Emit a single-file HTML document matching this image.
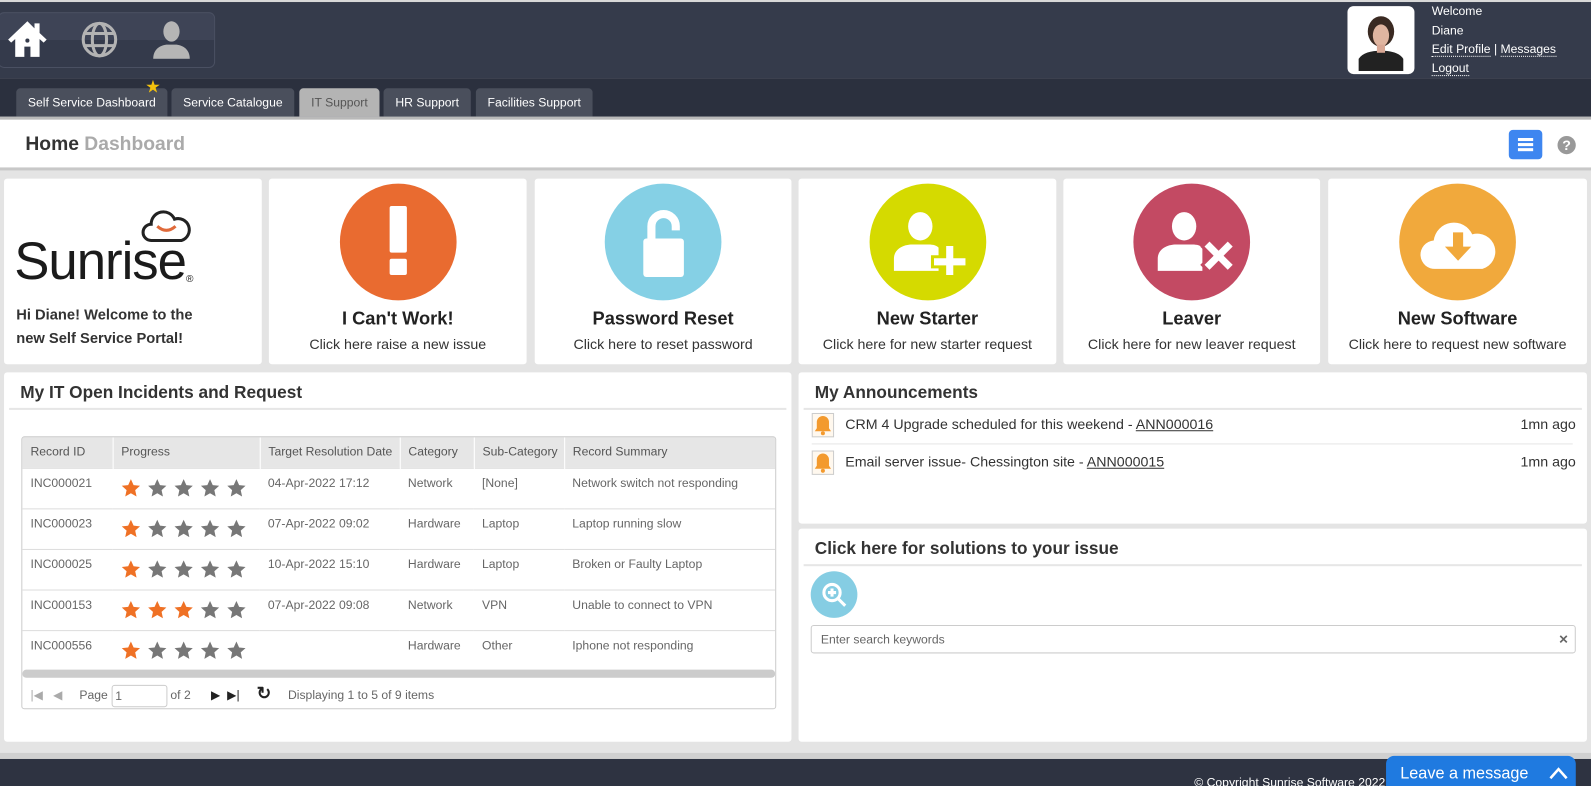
<!DOCTYPE html>
<html><head><meta charset="utf-8">
<style>
*{margin:0;padding:0;box-sizing:border-box}
body{width:1591px;height:786px;overflow:hidden;background:#e4e4e4;font-family:"Liberation Sans",Arial,sans-serif;position:relative}
#wrap{position:absolute;left:0;top:0;width:1568px;height:775px;transform:scale(1.01467);transform-origin:0 0;overflow:hidden}
.abs{position:absolute}
#top{left:0;top:0;width:1568px;height:77px;background:#353b4b;border-top:2px solid #d8d8d8}
#tabs{left:0;top:77px;width:1568px;height:38px;background:#2b303e}
#iconbox{left:-2px;top:12px;width:214px;height:55px;border:1px solid #4a5062;border-radius:6px;background:linear-gradient(#3e4456 0 50%,#343a4b 50%)}
.tab{position:absolute;top:87px;height:28px;background:#4a4f5c;color:#fff;font-size:12px;line-height:28px;text-align:center;border-radius:4px 4px 0 0}
#bar{left:0;top:115px;width:1568px;height:3px;background:#b9b9b9}
#hdr{left:0;top:118px;width:1568px;height:50px;background:#fff;border-bottom:3px solid #c8c8c8}
.card{position:absolute;background:#fff;border-radius:3px;top:176px;height:183px;text-align:center}
.card .c{width:115px;height:115px;border-radius:50%;margin:5px auto 0;position:relative}
.card h3{font-size:18px;color:#222;margin-top:8px;font-weight:bold}
.card p{font-size:14px;color:#333;margin-top:6px}
.panel{position:absolute;background:#fff;border-radius:3px}
.ptitle{font-size:17px;font-weight:bold;color:#333;padding:10px 0 0 11px;height:37px;border-bottom:2px solid #e6e6e6;margin:0 5px}
table{border-collapse:collapse;font-size:12px;color:#666}
td,th{text-align:left;font-weight:normal;padding:0 0 0 8px;vertical-align:top}
th{height:30px;line-height:29px;background:#e6e6e6;color:#555;border-left:1px solid #fff}
td{height:40px;padding-top:7px;border-top:1px solid #ddd}
.st{display:inline-block;width:20px;height:20px;margin-right:6px;margin-top:2px}
</style></head><body>
<svg width="0" height="0" style="position:absolute"><defs>
<symbol id="s" viewBox="0 0 24 24"><path d="M12 1.5l3.2 7 7.6.8-5.7 5.1 1.6 7.6L12 18.1 5.3 22l1.6-7.6L1.2 9.3l7.6-.8z"/></symbol>
</defs></svg>
<div id="wrap">
<div id="top" class="abs"></div>
<div id="iconbox" class="abs"></div>
<svg class="abs" style="left:6px;top:18px" width="42" height="40" viewBox="0 0 42 40"><path d="M21 3L2 21l3 3 4-3.6V38h9V28h6v10h9V20.4l4 3.6 3-3-7-6.5V5h-5v5z" fill="#fff"/><circle cx="21" cy="22" r="2" fill="#353b4b"/></svg>
<svg class="abs" style="left:80px;top:21px" width="36" height="36" viewBox="0 0 36 36" fill="none" stroke="#b3b3b3" stroke-width="3"><circle cx="18" cy="18" r="16"/><ellipse cx="18" cy="18" rx="7" ry="16"/><path d="M3 12h30M3 24h30"/></svg>
<svg class="abs" style="left:149px;top:20px" width="40" height="38" viewBox="0 0 40 38"><ellipse cx="20" cy="11" rx="8" ry="10" fill="#b5b5b5"/><path d="M2 38c0-9 6-13 13-14h10c7 1 13 5 13 14z" fill="#b5b5b5"/></svg>

<div class="abs" style="left:1328px;top:6px;width:66px;height:67px;background:#fff;border-radius:6px"></div>
<svg class="abs" style="left:1337px;top:14px" width="48" height="56" viewBox="0 0 48 56"><path d="M2 56V44c4-6 12-8 22-8s18 2 22 8v12z" fill="#222"/><ellipse cx="24" cy="17" rx="13" ry="15" fill="#3a2a22"/><ellipse cx="24" cy="21" rx="8" ry="11" fill="#e0b5a0"/><rect x="20" y="30" width="8" height="8" fill="#d9a895"/></svg>
<div class="abs" style="left:1411px;top:2px;color:#fff;font-size:12px;line-height:18.5px">Welcome<br>Diane<br><span style="border-bottom:1px dotted #fff">Edit Profile</span> | <span style="border-bottom:1px dotted #fff">Messages</span><br><span style="border-bottom:1px dotted #fff">Logout</span></div>

<div id="tabs" class="abs"></div>
<div class="tab" style="left:16px;width:149px">Self Service Dashboard</div>
<div class="abs" style="left:143px;top:77px;color:#f4c20d;font-size:17px;line-height:17px">★</div>
<div class="tab" style="left:169px;width:121px">Service Catalogue</div>
<div class="tab" style="left:295px;width:79px;background:#b4b4b4;color:#555">IT Support</div>
<div class="tab" style="left:378px;width:86px">HR Support</div>
<div class="tab" style="left:469px;width:115px">Facilities Support</div>
<div id="bar" class="abs"></div>
<div id="hdr" class="abs"></div>
<div class="abs" style="left:25px;top:132px;font-size:19px;font-weight:bold;color:#333">Home <span style="color:#aaa">Dashboard</span></div>
<div class="abs" style="left:1487px;top:128px;width:33px;height:29px;background:#3e86f0;border-radius:4px"></div>
<div class="abs" style="left:1496px;top:136px;width:15px;height:3px;background:#fff;box-shadow:0 5px 0 #fff,0 10px 0 #fff"></div>
<div class="abs" style="left:1535px;top:134px;width:18px;height:18px;border-radius:50%;background:#999;color:#fff;font-size:14px;font-weight:bold;text-align:center;line-height:18px">?</div>

<div class="card" style="left:4px;width:254px;text-align:left">
<svg class="abs" style="left:135px;top:27px" width="50" height="36" viewBox="0 0 50 36" fill="none"><path d="M10 34a8 8 0 0 1 0-16 12 12 0 0 1 23-5 9 9 0 0 1 7 21z" stroke="#222" stroke-width="3"/><path d="M16 20q9 8 18 0" stroke="#e06a3a" stroke-width="3"/></svg>
<div class="abs" style="left:10px;top:52px;font-size:52px;color:#1b1b1b;letter-spacing:-1px;line-height:60px">Sunrise<sup style="font-size:10px;vertical-align:top;position:relative;top:18px">®</sup></div>
<div class="abs" style="left:12px;top:124px;font-size:14.5px;font-weight:bold;color:#333;line-height:23px">Hi Diane! Welcome to the<br>new Self Service Portal!</div>
</div>
<div class="card" style="left:265px;width:254px"><div class="c" style="background:#e96b30"><div class="abs" style="left:49px;top:22px;width:17px;height:46px;background:#fff;border-radius:2px"></div><div class="abs" style="left:49px;top:74px;width:17px;height:16px;background:#fff;border-radius:2px"></div></div><h3>I Can't Work!</h3><p>Click here raise a new issue</p></div>
<div class="card" style="left:527px;width:253px"><div class="c" style="background:#85d0e5"><svg class="abs" style="left:30px;top:22px" width="56" height="72" viewBox="0 0 56 72"><path d="M16 32V20a12 12 0 0 1 24 0v4" fill="none" stroke="#fff" stroke-width="8"/><rect x="8" y="32" width="40" height="38" rx="3" fill="#fff"/></svg></div><h3>Password Reset</h3><p>Click here to reset password</p></div>
<div class="card" style="left:787px;width:254px"><div class="c" style="background:#d5da00"><svg class="abs" style="left:22px;top:26px" width="80" height="64" viewBox="0 0 80 64" fill="#fff"><ellipse cx="28" cy="16" rx="12" ry="14"/><path d="M2 60V48c0-10 10-14 18-14h16c5 0 8 1 10 3v23z"/><path d="M52 34h10v12h12v10H62v12H52V56H40V46h12z" stroke="#d5da00" stroke-width="3"/></svg></div><h3>New Starter</h3><p>Click here for new starter request</p></div>
<div class="card" style="left:1048px;width:253px"><div class="c" style="background:#c34a63"><svg class="abs" style="left:22px;top:26px" width="80" height="64" viewBox="0 0 80 64" fill="#fff"><ellipse cx="28" cy="16" rx="12" ry="14"/><path d="M2 60V48c0-10 10-14 18-14h16c5 0 8 1 10 3v23z"/><path d="M46 36l7-7 9 9 9-9 7 7-9 9 9 9-7 7-9-9-9 9-7-7 9-9z" stroke="#c34a63" stroke-width="3"/></svg></div><h3>Leaver</h3><p>Click here for new leaver request</p></div>
<div class="card" style="left:1309px;width:255px"><div class="c" style="background:#f1a93c"><svg class="abs" style="left:20px;top:28px" width="76" height="60" viewBox="0 0 76 60"><path d="M16 56a14 14 0 0 1-2-28 20 20 0 0 1 38-6 16 16 0 0 1 10 34z" fill="#fff"/><path d="M33 20h10v14h8L38 48 25 34h8z" fill="#f1a93c"/></svg></div><h3>New Software</h3><p>Click here to request new software</p></div>

<div class="panel" style="left:4px;top:367px;width:776px;height:364px">
<div class="ptitle">My IT Open Incidents and Request</div>
<div class="abs" style="left:17px;top:63px;width:744px;height:269px;border:1px solid #ccc;border-radius:3px;overflow:hidden">
<table style="width:742px">
<tr><th style="width:89px;border-left:0">Record ID</th><th style="width:145px">Progress</th><th style="width:138px">Target Resolution Date</th><th style="width:73px">Category</th><th style="width:89px">Sub-Category</th><th>Record Summary</th></tr>
<tr><td>INC000021</td><td><svg class="st" fill="#ef7125"><use href="#s"/></svg><svg class="st" fill="#777"><use href="#s"/></svg><svg class="st" fill="#777"><use href="#s"/></svg><svg class="st" fill="#777"><use href="#s"/></svg><svg class="st" fill="#777"><use href="#s"/></svg></td><td>04-Apr-2022 17:12</td><td>Network</td><td>[None]</td><td>Network switch not responding</td></tr>
<tr><td>INC000023</td><td><svg class="st" fill="#ef7125"><use href="#s"/></svg><svg class="st" fill="#777"><use href="#s"/></svg><svg class="st" fill="#777"><use href="#s"/></svg><svg class="st" fill="#777"><use href="#s"/></svg><svg class="st" fill="#777"><use href="#s"/></svg></td><td>07-Apr-2022 09:02</td><td>Hardware</td><td>Laptop</td><td>Laptop running slow</td></tr>
<tr><td>INC000025</td><td><svg class="st" fill="#ef7125"><use href="#s"/></svg><svg class="st" fill="#777"><use href="#s"/></svg><svg class="st" fill="#777"><use href="#s"/></svg><svg class="st" fill="#777"><use href="#s"/></svg><svg class="st" fill="#777"><use href="#s"/></svg></td><td>10-Apr-2022 15:10</td><td>Hardware</td><td>Laptop</td><td>Broken or Faulty Laptop</td></tr>
<tr><td>INC000153</td><td><svg class="st" fill="#ef7125"><use href="#s"/></svg><svg class="st" fill="#ef7125"><use href="#s"/></svg><svg class="st" fill="#ef7125"><use href="#s"/></svg><svg class="st" fill="#777"><use href="#s"/></svg><svg class="st" fill="#777"><use href="#s"/></svg></td><td>07-Apr-2022 09:08</td><td>Network</td><td>VPN</td><td>Unable to connect to VPN</td></tr>
<tr><td>INC000556</td><td><svg class="st" fill="#ef7125"><use href="#s"/></svg><svg class="st" fill="#777"><use href="#s"/></svg><svg class="st" fill="#777"><use href="#s"/></svg><svg class="st" fill="#777"><use href="#s"/></svg><svg class="st" fill="#777"><use href="#s"/></svg></td><td></td><td>Hardware</td><td>Other</td><td>Iphone not responding</td></tr>
</table>
<div class="abs" style="left:0;top:229px;width:742px;height:8px;background:#ccc;border-radius:4px"></div>
<div class="abs" style="left:8px;top:242px;font-size:12px;color:#666;line-height:22px;white-space:nowrap">
<span style="color:#aaa">|◀&nbsp;&nbsp;&nbsp;◀</span>&nbsp;&nbsp;&nbsp;&nbsp;&nbsp;Page <span style="display:inline-block;width:55px;height:22px;border:1px solid #ccc;border-radius:3px;vertical-align:middle;padding-left:3px;line-height:20px">1</span> of 2&nbsp;&nbsp;&nbsp;&nbsp;&nbsp;&nbsp;<span style="color:#222">▶&nbsp;&nbsp;▶|</span>&nbsp;&nbsp;&nbsp;&nbsp;&nbsp;<b style="color:#222;font-size:17px">↻</b>&nbsp;&nbsp;&nbsp;&nbsp;&nbsp;Displaying 1 to 5 of 9 items</div>
</div>
</div>

<div class="panel" style="left:787px;top:367px;width:777px;height:149px">
<div class="ptitle" style="height:37px">My Announcements</div>
<div class="abs" style="left:13px;top:40px;width:22px;height:24px;border:1px solid #ccc;background:#fff8ee"><svg width="20" height="22" viewBox="0 0 20 22"><path d="M10 2a6 6 0 0 0-6 6v6l-2 3h16l-2-3V8a6 6 0 0 0-6-6z" fill="#f39a2e"/><circle cx="10" cy="19" r="2" fill="#f39a2e"/></svg></div>
<div class="abs" style="left:46px;top:43px;font-size:14px;color:#333">CRM 4 Upgrade scheduled for this weekend - <u>ANN000016</u></div>
<div class="abs" style="right:11px;top:43px;font-size:14px;color:#333">1mn ago</div>
<div class="abs" style="left:13px;top:70px;width:750px;height:1px;background:#e6e6e6"></div>
<div class="abs" style="left:13px;top:77px;width:22px;height:24px;border:1px solid #ccc;background:#fff8ee"><svg width="20" height="22" viewBox="0 0 20 22"><path d="M10 2a6 6 0 0 0-6 6v6l-2 3h16l-2-3V8a6 6 0 0 0-6-6z" fill="#f39a2e"/><circle cx="10" cy="19" r="2" fill="#f39a2e"/></svg></div>
<div class="abs" style="left:46px;top:80px;font-size:14px;color:#333">Email server issue- Chessington site - <u>ANN000015</u></div>
<div class="abs" style="right:11px;top:80px;font-size:14px;color:#333">1mn ago</div>
</div>

<div class="panel" style="left:787px;top:521px;width:777px;height:210px">
<div class="ptitle">Click here for solutions to your issue</div>
<div class="abs" style="left:12px;top:42px;width:46px;height:46px;border-radius:50%;background:#85cde3"><svg width="46" height="46" viewBox="0 0 46 46" fill="none" stroke="#fff" stroke-width="3"><circle cx="21" cy="21" r="8"/><path d="M27 27l7 7M21 17v8M17 21h8"/></svg></div>
<div class="abs" style="left:12px;top:95px;width:754px;height:28px;border:1px solid #ccc;border-radius:3px;font-size:12px;color:#666;line-height:26px;padding-left:9px">Enter search keywords<span style="position:absolute;right:6px;color:#666;font-weight:bold">✕</span></div>
</div>

<div class="abs" style="left:0;top:742px;width:1568px;height:6px;background:#d0d0d0"></div>
<div class="abs" style="left:0;top:748px;width:1568px;height:30px;background:#2e3341"></div>
<div class="abs" style="left:1177px;top:764px;font-size:12px;color:#fff">© Copyright Sunrise Software 2022</div>
<div class="abs" style="left:1366px;top:745px;width:187px;height:32px;background:#1f7ae0;border-radius:8px 8px 0 0;color:#fff;font-size:16px;padding:9px 0 0 14px">Leave a message<svg class="abs" style="left:160px;top:10px" width="20" height="14" viewBox="0 0 20 14" fill="none" stroke="#fff" stroke-width="2.5"><path d="M2 12l8-9 8 9"/></svg></div>
</div>
</body></html>
